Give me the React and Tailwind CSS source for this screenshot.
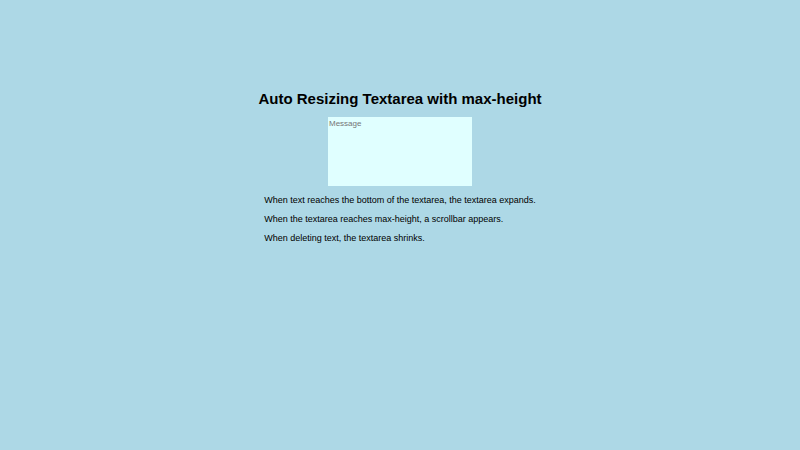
import React, { useEffect, useRef, useState } from "react";

const notes = [
  "When text reaches the bottom of the textarea, the textarea expands.",
  "When the textarea reaches max-height, a scrollbar appears.",
  "When deleting text, the textarea shrinks.",
];

const App = () => {
  const [message, setMessage] = useState("");
  const textareaRef = useRef(null);

  useEffect(() => {
    const el = textareaRef.current;
    // reset first so the box can shrink again
    el.style.height = "auto";
    el.style.height = `${el.scrollHeight}px`;
  }, [message]);

  return (
    <div className="flex min-h-screen flex-col items-center bg-[#add8e6] px-4 pt-[89px] font-['Liberation_Sans',Arial,sans-serif] text-black">
      <h1 className="text-center text-[15px] leading-5 font-bold">
        Auto Resizing Textarea with max-height
      </h1>

      <textarea
        ref={textareaRef}
        aria-label="Message"
        placeholder="Message"
        value={message}
        onChange={(e) => setMessage(e.target.value)}
        className="mt-2 max-h-[120px] min-h-[69px] w-36 resize-none bg-[#e0ffff] px-px text-[8px] leading-[13px] outline-none placeholder:text-[#757575]"
      />

      <div className="mt-[9px] flex flex-col gap-2 text-[9px] leading-[11px]">
        {notes.map((note) => (
          <p key={note}>{note}</p>
        ))}
      </div>
    </div>
  );
};

export default App;
